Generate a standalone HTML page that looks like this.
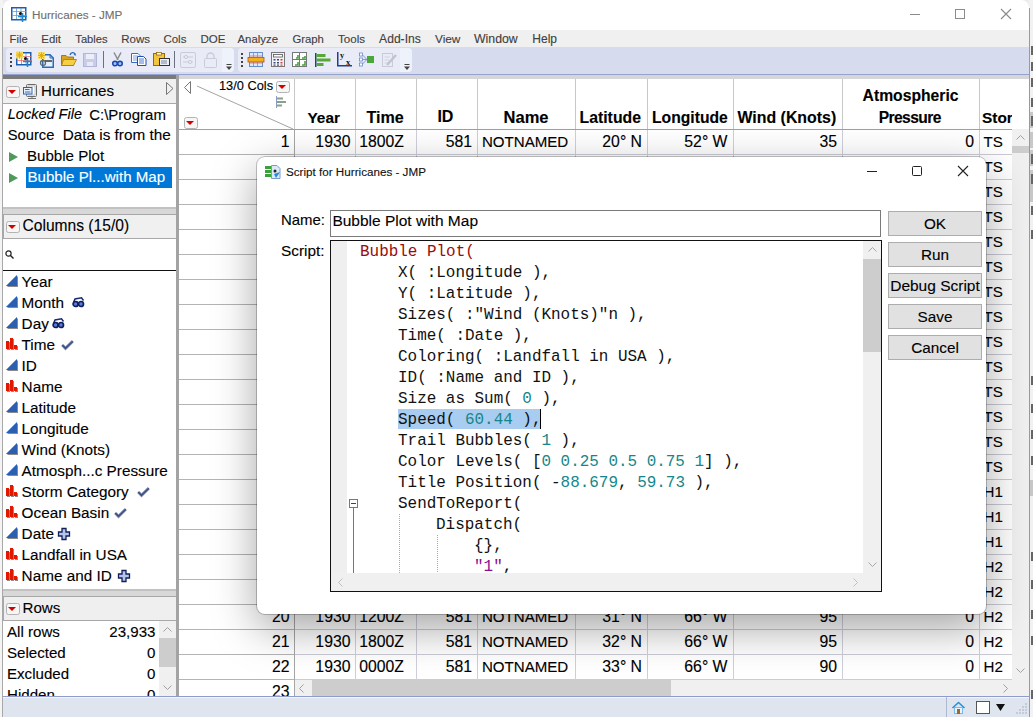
<!DOCTYPE html>
<html><head><meta charset="utf-8">
<style>
*{margin:0;padding:0;box-sizing:border-box}
html,body{width:1033px;height:717px;overflow:hidden;background:#ececec;font-family:"Liberation Sans",sans-serif;color:#000;position:relative}
.a{position:absolute}
.t{position:absolute;white-space:pre;line-height:1;-webkit-text-stroke:0.12px currentColor}
.dd{position:absolute;width:14px;height:12px;border:1px solid #b3b3b3;border-radius:2.5px;background:#f6f6f6}
.dd:after{content:"";position:absolute;left:1.2px;top:2.8px;border-left:4.2px solid transparent;border-right:4.2px solid transparent;border-top:4.5px solid #d40000}
svg{position:absolute;overflow:visible}
</style></head><body>

<div class="a" style="left:0px;top:0px;width:3px;height:717px;background:#f4f4f4"></div>
<div class="a" style="left:2px;top:8px;width:1px;height:709px;background:#a8a8a8"></div>
<div class="a" style="left:1029px;top:0px;width:4px;height:717px;background:#f2f2f2"></div>
<div class="a" style="left:1029px;top:8px;width:1px;height:709px;background:#9a9a9a"></div>
<div class="a" style="left:1030.5px;top:46px;width:2px;height:9px;background:#666"></div>
<div class="a" style="left:1030.5px;top:62px;width:2px;height:9px;background:#666"></div>
<div class="a" style="left:1030.5px;top:78px;width:2px;height:9px;background:#666"></div>
<div class="a" style="left:1030.5px;top:98px;width:2px;height:9px;background:#666"></div>
<div class="a" style="left:1030.5px;top:134px;width:2px;height:9px;background:#666"></div>
<div class="a" style="left:1030.5px;top:150px;width:2px;height:9px;background:#666"></div>
<div class="a" style="left:1030.5px;top:170px;width:2px;height:9px;background:#666"></div>
<div class="a" style="left:1030.5px;top:206px;width:2px;height:9px;background:#666"></div>
<div class="a" style="left:1030.5px;top:230px;width:2px;height:9px;background:#666"></div>
<div class="a" style="left:1030.5px;top:376px;width:2px;height:9px;background:#666"></div>
<div class="a" style="left:1030.5px;top:404px;width:2px;height:9px;background:#666"></div>
<div class="a" style="left:1030.5px;top:430px;width:2px;height:9px;background:#666"></div>
<div class="a" style="left:1030.5px;top:456px;width:2px;height:9px;background:#666"></div>
<div class="a" style="left:1030.5px;top:480px;width:2px;height:9px;background:#666"></div>
<div class="a" style="left:1030.5px;top:552px;width:2px;height:9px;background:#666"></div>
<div class="a" style="left:1030.5px;top:580px;width:2px;height:9px;background:#666"></div>
<div class="a" style="left:1030.5px;top:610px;width:2px;height:9px;background:#666"></div>
<div class="a" style="left:1030.5px;top:636px;width:2px;height:9px;background:#666"></div>
<div class="a" style="left:1030.5px;top:690px;width:2px;height:9px;background:#666"></div>
<div class="a" style="left:1030px;top:112px;width:3px;height:16px;background:#c8c8c8"></div>
<div class="a" style="left:1030px;top:132px;width:3px;height:16px;background:#c8c8c8"></div>
<div class="a" style="left:1030px;top:150px;width:3px;height:16px;background:#c8c8c8"></div>
<div class="a" style="left:1030px;top:170px;width:3px;height:16px;background:#c8c8c8"></div>
<div class="a" style="left:1030px;top:186px;width:3px;height:16px;background:#c8c8c8"></div>
<div class="a" style="left:1030px;top:480px;width:3px;height:16px;background:#c8c8c8"></div>
<div class="a" style="left:1030.5px;top:116px;width:2px;height:10px;background:#666"></div>
<div class="a" style="left:1030.5px;top:154px;width:2px;height:10px;background:#666"></div>
<div class="a" style="left:1030.5px;top:174px;width:2px;height:10px;background:#666"></div>
<div class="a" style="left:3px;top:0px;width:1026px;height:30px;background:#fff;border-top-left-radius:8px;border-top-right-radius:8px"></div>
<div class="t" style="left:32px;top:9.00px;font-size:11.7px;color:#707070">Hurricanes - JMP</div>
<svg style="left:11px;top:6px" width="16" height="16"><rect x="0.75" y="1.75" width="14" height="12" fill="#fff" stroke="#1b5fb0" stroke-width="1.5"/><path d="M1 5.5H15M1 9.5H15" stroke="#f07070" stroke-width="0.8"/><path d="M5.5 2V13M10 2V13" stroke="#5f8fd0" stroke-width="0.8"/><circle cx="9.5" cy="7.5" r="1.6" fill="#111"/><path d="M7 10.5H16M11.5 7V16" stroke="#1a88d0" stroke-width="1.6"/></svg>
<div class="a" style="left:910px;top:14px;width:10px;height:1px;background:#8a8a8a"></div>
<div class="a" style="left:955px;top:9px;width:10px;height:10px;border:1px solid #8a8a8a"></div>
<svg style="left:1001px;top:9px" width="10" height="10"><path d="M0 0L10 10M10 0L0 10" stroke="#8a8a8a" stroke-width="1.1"/></svg>
<div class="a" style="left:3px;top:30px;width:1026px;height:17px;background:#f0f0f0"></div>
<div class="t" style="left:9.6px;top:34.12px;font-size:11.2px;color:#404040">File</div>
<div class="t" style="left:41.3px;top:33.95px;font-size:11.4px;color:#404040">Edit</div>
<div class="t" style="left:75.3px;top:34.12px;font-size:11.2px;color:#404040">Tables</div>
<div class="t" style="left:121.3px;top:33.87px;font-size:11.5px;color:#404040">Rows</div>
<div class="t" style="left:163.4px;top:33.87px;font-size:11.5px;color:#404040">Cols</div>
<div class="t" style="left:200.4px;top:33.87px;font-size:11.5px;color:#404040">DOE</div>
<div class="t" style="left:237.5px;top:33.95px;font-size:11.4px;color:#404040">Analyze</div>
<div class="t" style="left:292.4px;top:34.01px;font-size:11.33px;color:#404040">Graph</div>
<div class="t" style="left:338.1px;top:33.81px;font-size:11.57px;color:#404040">Tools</div>
<div class="t" style="left:379.1px;top:33.36px;font-size:12.1px;color:#404040">Add-Ins</div>
<div class="t" style="left:435px;top:33.59px;font-size:11.82px;color:#404040">View</div>
<div class="t" style="left:474px;top:33.19px;font-size:12.3px;color:#404040">Window</div>
<div class="t" style="left:532.3px;top:33.44px;font-size:12px;color:#404040">Help</div>
<div class="a" style="left:3px;top:47px;width:1026px;height:28px;background:#d6dcee;border-bottom:1px solid #95a1cf"></div>
<div class="a" style="left:6px;top:48px;width:228px;height:24px;background:#e9ecf6;border-radius:4px"></div>
<div class="a" style="left:222px;top:48px;width:12px;height:24px;background:#eef2fb;border-radius:0 4px 4px 0"></div>
<div class="a" style="left:238px;top:48px;width:174px;height:24px;background:#e9ecf6;border-radius:4px"></div>
<div class="a" style="left:400px;top:48px;width:12px;height:24px;background:#eef2fb;border-radius:0 4px 4px 0"></div>
<div class="a" style="left:10px;top:52.5px;width:2px;height:2px;background:#444"></div>
<div class="a" style="left:10px;top:56.5px;width:2px;height:2px;background:#444"></div>
<div class="a" style="left:10px;top:60.5px;width:2px;height:2px;background:#444"></div>
<div class="a" style="left:10px;top:64.5px;width:2px;height:2px;background:#444"></div>
<div class="a" style="left:241px;top:52.5px;width:2px;height:2px;background:#444"></div>
<div class="a" style="left:241px;top:56.5px;width:2px;height:2px;background:#444"></div>
<div class="a" style="left:241px;top:60.5px;width:2px;height:2px;background:#444"></div>
<div class="a" style="left:241px;top:64.5px;width:2px;height:2px;background:#444"></div>
<svg style="left:16px;top:51px" width="16" height="16"><rect x="0.75" y="1.75" width="14" height="12" fill="#fff" stroke="#1b5fb0" stroke-width="1.5"/><path d="M1 5.5H15M1 9.5H15" stroke="#f07070" stroke-width="0.8"/><path d="M5.5 2V13M10 2V13" stroke="#5f8fd0" stroke-width="0.8"/><circle cx="9.5" cy="7.5" r="1.6" fill="#111"/><path d="M7 10.5H16M11.5 7V16" stroke="#1a88d0" stroke-width="1.6"/><g transform="translate(0,0.5)"><g fill="#f2c200"><rect x="0" y="0" width="7" height="7" fill="#f7de6a"/><path d="M3.5 0V7M0 3.5H7M1 1L6 6M6 1L1 6" stroke="#e0a800" stroke-width="0.9"/></g></g></svg>
<svg style="left:38px;top:52px" width="17" height="16"><path d="M4.75 2.75H12L15.25 6V15.25H4.75Z" fill="#e6f0fa" stroke="#2a6ab8" stroke-width="1.5"/><path d="M12 2.75V6H15.25" fill="none" stroke="#2a6ab8" stroke-width="1"/><circle cx="5" cy="11" r="2.5" fill="none" stroke="#666" stroke-width="1.3"/><path d="M7 9H14" stroke="#555" stroke-width="1.8"/><g fill="#f2c200"><rect x="0" y="0" width="7" height="7" fill="#f7de6a"/><path d="M3.5 0V7M0 3.5H7M1 1L6 6M6 1L1 6" stroke="#e0a800" stroke-width="0.9"/></g></svg>
<svg style="left:61px;top:51px" width="16" height="16"><path d="M0.5 4.5H5L6.5 6H12.5V14.5H0.5Z" fill="#d9a520" stroke="#8a6410" stroke-width="0.8"/><path d="M2.5 8.5H15.5L12.5 14.5H0.5Z" fill="#f7cf45" stroke="#a87a10" stroke-width="0.8"/><path d="M9 4C10 1 13 1 14 3" fill="none" stroke="#2a6ab8" stroke-width="1.4"/><path d="M12.5 3.5L15 2.5L14.5 5Z" fill="#2a6ab8"/></svg>
<svg style="left:83px;top:53px" width="15" height="15"><rect x="0.5" y="0.5" width="13" height="13" fill="#c9cde8" stroke="#b0b6da"/><rect x="3" y="1" width="8" height="5" fill="#eceef8"/><rect x="4" y="9" width="6" height="4" fill="#e8eaf6"/></svg>
<div class="a" style="left:103px;top:51px;width:1px;height:17px;background:#6a7080"></div>
<svg style="left:112px;top:52px" width="11" height="15"><path d="M2 0.5L6 8M9 0.5L5 8" stroke="#8a8a8a" stroke-width="1.5"/><circle cx="3" cy="11.5" r="2.3" fill="#9fbff0" stroke="#1848b0" stroke-width="1.5"/><circle cx="8" cy="11.5" r="2.3" fill="#9fbff0" stroke="#1848b0" stroke-width="1.5"/></svg>
<svg style="left:131px;top:53px" width="16" height="13"><path d="M0.5 0.5H7L9 2.5V9.5H0.5Z" fill="#fff" stroke="#3a6ac8"/><path d="M2 3H7M2 5H7M2 7H7" stroke="#5a8ad8" stroke-width="0.8"/><path d="M6.5 3.5H12.5L15 6V12.5H6.5Z" fill="#fff" stroke="#1f4fb0"/><path d="M8 6H13M8 8H13M8 10H13" stroke="#3a6ac8" stroke-width="0.9"/></svg>
<svg style="left:153px;top:52px" width="17" height="14"><rect x="0.5" y="1.5" width="11" height="12" fill="#f3c53a" stroke="#9a6a00"/><rect x="3.5" y="0.5" width="5" height="2.5" fill="#fff" stroke="#9a6a00" stroke-width="0.8"/><rect x="6.5" y="6.5" width="10" height="7" fill="#eceff6" stroke="#333"/><path d="M8 9H14M8 11H14" stroke="#6a7a9a" stroke-width="0.9"/></svg>
<div class="a" style="left:174px;top:51px;width:1px;height:17px;background:#6a7080"></div>
<svg style="left:180px;top:52px" width="17" height="16"><rect x="0.5" y="0.5" width="15" height="15" rx="1.5" fill="none" stroke="#c8ccd8"/><path d="M3 5H13M3 10H13" stroke="#c8ccd8"/><circle cx="6" cy="5" r="1.6" fill="#e9ecf6" stroke="#c8ccd8"/><circle cx="10" cy="10" r="1.6" fill="#e9ecf6" stroke="#c8ccd8"/></svg>
<svg style="left:204px;top:52px" width="13" height="16"><path d="M3 7V4.5A3.5 3.5 0 0 1 10 4.5V7" fill="none" stroke="#c8ccd8" stroke-width="1.3"/><rect x="0.5" y="6.5" width="12" height="9" rx="1" fill="none" stroke="#c8ccd8"/></svg>
<svg style="left:225.5px;top:63.5px" width="6" height="7"><path d="M0.5 0.5H5.5" stroke="#444"/><path d="M0 2.5H6L3 6Z" fill="#444"/></svg>
<svg style="left:248px;top:52px" width="17" height="15"><rect x="1.5" y="0.5" width="13" height="14" fill="#dfe8f7" stroke="#6a8cc8"/><path d="M2 4H14M2 11H14M5.5 1V14M9.5 1V14" stroke="#e07060" stroke-width="0.8"/><rect x="0" y="5.5" width="16" height="4.5" fill="#f0b020" stroke="#c05010" stroke-width="0.8"/></svg>
<svg style="left:271px;top:52px" width="15" height="15"><rect x="0.5" y="0.5" width="13" height="14" fill="#f4f4f6" stroke="#777"/><rect x="2.5" y="2.5" width="9" height="2.5" fill="#fff" stroke="#555" stroke-width="0.8"/><g fill="#3a4a7a"><rect x="2.5" y="7" width="2" height="1.5"/><rect x="6" y="7" width="2" height="1.5"/><rect x="2.5" y="10" width="2" height="1.5"/><rect x="6" y="10" width="2" height="1.5"/><rect x="2.5" y="12.5" width="2" height="1.2"/><rect x="6" y="12.5" width="2" height="1.2"/></g><g fill="#d04040"><rect x="9.5" y="7" width="2" height="1.5"/><rect x="9.5" y="10" width="2" height="1.5"/><rect x="9.5" y="12.5" width="2" height="1.2"/></g></svg>
<svg style="left:292px;top:52px" width="16" height="15"><rect x="0.5" y="0.5" width="14" height="14" fill="#fff" stroke="#777"/><path d="M7.5 1V14M1 7.5H14" stroke="#777"/><path d="M4 6H6V3M10 6H13V4M3 13H6V10M10 13H13V9" stroke="#4aa040" stroke-width="1.6" fill="none"/></svg>
<svg style="left:315px;top:53px" width="16" height="14"><path d="M0.75 0V14" stroke="#1f3f8f" stroke-width="1.5"/><rect x="1.5" y="1" width="9" height="3" fill="#58a838"/><rect x="1.5" y="5.5" width="14" height="3" fill="#58a838"/><rect x="1.5" y="10" width="7" height="3" fill="#58a838"/></svg>
<svg style="left:337px;top:51px" width="15" height="16"><path d="M0.75 1V14.75H15" fill="none" stroke="#1f3f8f" stroke-width="1.5"/><text x="3" y="7" font-family="Liberation Serif" font-weight="bold" font-size="8.5" fill="#111">y</text><text x="9" y="13.5" font-family="Liberation Serif" font-weight="bold" font-size="8.5" fill="#111">x</text></svg>
<svg style="left:359px;top:52px" width="15" height="15"><path d="M3 2.5L8 7.5M3 7.5H8M3 12.5L8 7.5" stroke="#7a9ad8" stroke-width="1"/><rect x="0.5" y="1" width="3" height="3" fill="#fff" stroke="#6a8ac8" stroke-width="0.8"/><rect x="0.5" y="6" width="3" height="3" fill="#fff" stroke="#6a8ac8" stroke-width="0.8"/><rect x="0.5" y="11" width="3" height="3" fill="#fff" stroke="#6a8ac8" stroke-width="0.8"/><rect x="8" y="4" width="7" height="7" fill="#4aa838"/></svg>
<svg style="left:382px;top:52px" width="15" height="16"><rect x="0.5" y="1.5" width="10" height="13" fill="none" stroke="#c8ccd8"/><path d="M2.5 5H8M2.5 8H7M2.5 11H6" stroke="#d0d4e0"/><path d="M5 13L14 3" stroke="#c0c4d2" stroke-width="2.5"/></svg>
<svg style="left:403.5px;top:63.5px" width="6" height="7"><path d="M0.5 0.5H5.5" stroke="#444"/><path d="M0 2.5H6L3 6Z" fill="#444"/></svg>
<div class="a" style="left:3px;top:75px;width:173px;height:4px;background:#7a7a7a"></div>
<div class="a" style="left:179px;top:75px;width:850px;height:4px;background:#d6d6d6"></div>
<div class="a" style="left:176px;top:75px;width:3px;height:621px;background:#a3a3a3"></div>
<div class="a" style="left:3px;top:79px;width:173px;height:617px;background:#fff"></div>
<div class="a" style="left:3px;top:79px;width:173px;height:25px;background:#f0f0f0;border-bottom:1px solid #a8a8a8"></div>
<div class="dd" style="left:6px;top:86px"></div>
<svg style="left:23px;top:84px" width="15" height="16"><rect x="3.5" y="0.5" width="10" height="12" rx="1" fill="#f4f4f4" stroke="#6a6a6a"/><rect x="5" y="2" width="7" height="9" fill="#fff" stroke="#999" stroke-width="0.6"/><path d="M5 14.5H13M9 12.5V14.5" stroke="#707070"/><rect x="0.5" y="3.5" width="8.5" height="6.5" fill="#e8f0fa" stroke="#2a62b8"/><path d="M2 5.5H6.5M2 8H7.5" stroke="#3a6ac0" stroke-width="1.1"/></svg>
<div class="t" style="left:41px;top:83.22px;font-size:15.1px;">Hurricanes</div>
<svg style="left:166px;top:82px" width="8" height="13"><path d="M0.5 0.5L7 6.5L0.5 12.5Z" fill="none" stroke="#777"/></svg>
<div class="t" style="left:7.8px;top:107.03px;font-size:14.5px;font-style:italic">Locked File</div>
<div class="t" style="left:89.2px;top:106.60px;font-size:15px;">C:\Program</div>
<div class="t" style="left:7.8px;top:127.76px;font-size:14.7px;">Source</div>
<div class="t" style="left:62.7px;top:127.25px;font-size:15.3px;">Data is from the</div>
<svg style="left:9px;top:152px" width="9" height="10"><path d="M0 0L9 5L0 10Z" fill="#4f9a5a"/></svg>
<svg style="left:9px;top:173px" width="9" height="10"><path d="M0 0L9 5L0 10Z" fill="#4f9a5a"/></svg>
<div class="t" style="left:27px;top:148.42px;font-size:15.1px;">Bubble Plot</div>
<div class="a" style="left:26px;top:167px;width:146px;height:21px;background:#0078d7"></div>
<div class="t" style="left:27.5px;top:169.42px;font-size:15.1px;color:#fff">Bubble Pl...with Map</div>
<div class="a" style="left:3px;top:207px;width:173px;height:7px;background:#d8d8d8;border-top:2px solid #c2c2c2"></div>
<div class="a" style="left:3px;top:214px;width:173px;height:25px;background:#f0f0f0;border:1px solid #a8a8a8;border-right:none"></div>
<div class="dd" style="left:6px;top:221px"></div>
<div class="t" style="left:22.5px;top:218.29px;font-size:15.6px;">Columns (15/0)</div>
<svg style="left:5px;top:250px" width="9" height="9"><circle cx="3.5" cy="3.5" r="2.6" fill="none" stroke="#222" stroke-width="1.2"/><line x1="5.5" y1="5.5" x2="8.5" y2="8.5" stroke="#222" stroke-width="1.4"/></svg>
<div class="a" style="left:3px;top:270px;width:173px;height:1px;background:#111"></div>
<svg style="left:6px;top:275.0px" width="13" height="13"><path d="M1 12L12 1L12 12Z" fill="#8a8a8a"/><path d="M0 11L11 0L11 11Z" fill="#2d5fb0"/><path d="M0.5 10.5L10.5 0.5" stroke="#5a9af0" stroke-width="1" stroke-dasharray="1,0.5"/></svg>
<div class="t" style="left:21.6px;top:273.65px;font-size:15.3px;">Year</div>
<svg style="left:6px;top:296.0px" width="13" height="13"><path d="M1 12L12 1L12 12Z" fill="#8a8a8a"/><path d="M0 11L11 0L11 11Z" fill="#2d5fb0"/><path d="M0.5 10.5L10.5 0.5" stroke="#5a9af0" stroke-width="1" stroke-dasharray="1,0.5"/></svg>
<div class="t" style="left:21.6px;top:294.65px;font-size:15.3px;">Month</div>
<svg style="left:72.0px;top:297.1px" width="13" height="11"><path d="M1.5 5.5L3 2L9.5 0.8L11.5 3.5" fill="none" stroke="#1a2c78" stroke-width="1.5"/><circle cx="3.6" cy="7" r="2.5" fill="#5a7ad8" stroke="#101f5c" stroke-width="1.7"/><circle cx="9" cy="7" r="2.5" fill="#5a7ad8" stroke="#101f5c" stroke-width="1.7"/></svg>
<svg style="left:6px;top:317.0px" width="13" height="13"><path d="M1 12L12 1L12 12Z" fill="#8a8a8a"/><path d="M0 11L11 0L11 11Z" fill="#2d5fb0"/><path d="M0.5 10.5L10.5 0.5" stroke="#5a9af0" stroke-width="1" stroke-dasharray="1,0.5"/></svg>
<div class="t" style="left:21.6px;top:315.65px;font-size:15.3px;">Day</div>
<svg style="left:52.2px;top:318.1px" width="13" height="11"><path d="M1.5 5.5L3 2L9.5 0.8L11.5 3.5" fill="none" stroke="#1a2c78" stroke-width="1.5"/><circle cx="3.6" cy="7" r="2.5" fill="#5a7ad8" stroke="#101f5c" stroke-width="1.7"/><circle cx="9" cy="7" r="2.5" fill="#5a7ad8" stroke="#101f5c" stroke-width="1.7"/></svg>
<svg style="left:6px;top:338.3px" width="13" height="13"><g fill="#8a8a8a"><rect x="1" y="4" width="3" height="8"/><rect x="5" y="1" width="3" height="11"/><rect x="9" y="8" width="3" height="4"/></g><g fill="#e01800"><rect x="0" y="3" width="3" height="8"/><rect x="4" y="0" width="3" height="11"/><rect x="8" y="7" width="3" height="4"/></g></svg>
<div class="t" style="left:21.6px;top:336.65px;font-size:15.3px;">Time</div>
<svg style="left:61.0px;top:339.6px" width="13" height="10"><path d="M1.2 5L4.5 8.3L11.8 1.2" fill="none" stroke="#8a96b8" stroke-width="3"/><path d="M1.2 5L4.5 8.3L11.8 1.2" fill="none" stroke="#3f4f80" stroke-width="1.6"/></svg>
<svg style="left:6px;top:359.0px" width="13" height="13"><path d="M1 12L12 1L12 12Z" fill="#8a8a8a"/><path d="M0 11L11 0L11 11Z" fill="#2d5fb0"/><path d="M0.5 10.5L10.5 0.5" stroke="#5a9af0" stroke-width="1" stroke-dasharray="1,0.5"/></svg>
<div class="t" style="left:21.6px;top:357.65px;font-size:15.3px;">ID</div>
<svg style="left:6px;top:380.3px" width="13" height="13"><g fill="#8a8a8a"><rect x="1" y="4" width="3" height="8"/><rect x="5" y="1" width="3" height="11"/><rect x="9" y="8" width="3" height="4"/></g><g fill="#e01800"><rect x="0" y="3" width="3" height="8"/><rect x="4" y="0" width="3" height="11"/><rect x="8" y="7" width="3" height="4"/></g></svg>
<div class="t" style="left:21.6px;top:378.65px;font-size:15.3px;">Name</div>
<svg style="left:6px;top:401.0px" width="13" height="13"><path d="M1 12L12 1L12 12Z" fill="#8a8a8a"/><path d="M0 11L11 0L11 11Z" fill="#2d5fb0"/><path d="M0.5 10.5L10.5 0.5" stroke="#5a9af0" stroke-width="1" stroke-dasharray="1,0.5"/></svg>
<div class="t" style="left:21.6px;top:399.65px;font-size:15.3px;">Latitude</div>
<svg style="left:6px;top:422.0px" width="13" height="13"><path d="M1 12L12 1L12 12Z" fill="#8a8a8a"/><path d="M0 11L11 0L11 11Z" fill="#2d5fb0"/><path d="M0.5 10.5L10.5 0.5" stroke="#5a9af0" stroke-width="1" stroke-dasharray="1,0.5"/></svg>
<div class="t" style="left:21.6px;top:420.65px;font-size:15.3px;">Longitude</div>
<svg style="left:6px;top:443.0px" width="13" height="13"><path d="M1 12L12 1L12 12Z" fill="#8a8a8a"/><path d="M0 11L11 0L11 11Z" fill="#2d5fb0"/><path d="M0.5 10.5L10.5 0.5" stroke="#5a9af0" stroke-width="1" stroke-dasharray="1,0.5"/></svg>
<div class="t" style="left:21.6px;top:441.65px;font-size:15.3px;">Wind (Knots)</div>
<svg style="left:6px;top:464.0px" width="13" height="13"><path d="M1 12L12 1L12 12Z" fill="#8a8a8a"/><path d="M0 11L11 0L11 11Z" fill="#2d5fb0"/><path d="M0.5 10.5L10.5 0.5" stroke="#5a9af0" stroke-width="1" stroke-dasharray="1,0.5"/></svg>
<div class="t" style="left:21.6px;top:462.65px;font-size:15.3px;">Atmosph...c Pressure</div>
<svg style="left:6px;top:485.3px" width="13" height="13"><g fill="#8a8a8a"><rect x="1" y="4" width="3" height="8"/><rect x="5" y="1" width="3" height="11"/><rect x="9" y="8" width="3" height="4"/></g><g fill="#e01800"><rect x="0" y="3" width="3" height="8"/><rect x="4" y="0" width="3" height="11"/><rect x="8" y="7" width="3" height="4"/></g></svg>
<div class="t" style="left:21.6px;top:483.65px;font-size:15.3px;">Storm Category</div>
<svg style="left:137.0px;top:486.6px" width="13" height="10"><path d="M1.2 5L4.5 8.3L11.8 1.2" fill="none" stroke="#8a96b8" stroke-width="3"/><path d="M1.2 5L4.5 8.3L11.8 1.2" fill="none" stroke="#3f4f80" stroke-width="1.6"/></svg>
<svg style="left:6px;top:506.3px" width="13" height="13"><g fill="#8a8a8a"><rect x="1" y="4" width="3" height="8"/><rect x="5" y="1" width="3" height="11"/><rect x="9" y="8" width="3" height="4"/></g><g fill="#e01800"><rect x="0" y="3" width="3" height="8"/><rect x="4" y="0" width="3" height="11"/><rect x="8" y="7" width="3" height="4"/></g></svg>
<div class="t" style="left:21.6px;top:504.65px;font-size:15.3px;">Ocean Basin</div>
<svg style="left:113.5px;top:507.6px" width="13" height="10"><path d="M1.2 5L4.5 8.3L11.8 1.2" fill="none" stroke="#8a96b8" stroke-width="3"/><path d="M1.2 5L4.5 8.3L11.8 1.2" fill="none" stroke="#3f4f80" stroke-width="1.6"/></svg>
<svg style="left:6px;top:527.0px" width="13" height="13"><path d="M1 12L12 1L12 12Z" fill="#8a8a8a"/><path d="M0 11L11 0L11 11Z" fill="#2d5fb0"/><path d="M0.5 10.5L10.5 0.5" stroke="#5a9af0" stroke-width="1" stroke-dasharray="1,0.5"/></svg>
<div class="t" style="left:21.6px;top:525.65px;font-size:15.3px;">Date</div>
<svg style="left:58.0px;top:527.6px" width="12" height="12"><path d="M4 0.5H8V4H11.5V8H8V11.5H4V8H0.5V4H4Z" fill="#b4c4ea" stroke="#101f5a" stroke-width="1.3"/></svg>
<svg style="left:6px;top:548.3px" width="13" height="13"><g fill="#8a8a8a"><rect x="1" y="4" width="3" height="8"/><rect x="5" y="1" width="3" height="11"/><rect x="9" y="8" width="3" height="4"/></g><g fill="#e01800"><rect x="0" y="3" width="3" height="8"/><rect x="4" y="0" width="3" height="11"/><rect x="8" y="7" width="3" height="4"/></g></svg>
<div class="t" style="left:21.6px;top:546.65px;font-size:15.3px;">Landfall in USA</div>
<svg style="left:6px;top:569.3px" width="13" height="13"><g fill="#8a8a8a"><rect x="1" y="4" width="3" height="8"/><rect x="5" y="1" width="3" height="11"/><rect x="9" y="8" width="3" height="4"/></g><g fill="#e01800"><rect x="0" y="3" width="3" height="8"/><rect x="4" y="0" width="3" height="11"/><rect x="8" y="7" width="3" height="4"/></g></svg>
<div class="t" style="left:21.6px;top:567.65px;font-size:15.3px;">Name and ID</div>
<svg style="left:118.0px;top:569.6px" width="12" height="12"><path d="M4 0.5H8V4H11.5V8H8V11.5H4V8H0.5V4H4Z" fill="#b4c4ea" stroke="#101f5a" stroke-width="1.3"/></svg>
<div class="a" style="left:3px;top:589px;width:173px;height:8px;background:#d8d8d8;border-top:2px solid #c2c2c2"></div>
<div class="a" style="left:3px;top:596px;width:173px;height:25px;background:#efefef;border:1px solid #a8a8a8;border-right:none"></div>
<div class="dd" style="left:6px;top:603px"></div>
<div class="t" style="left:22.5px;top:599.92px;font-size:15.1px;">Rows</div>
<div class="t" style="left:7px;top:624.22px;font-size:15.1px;">All rows</div>
<div class="t" style="right:877.5px;top:624.22px;font-size:15.1px;">23,933</div>
<div class="t" style="left:7px;top:645.12px;font-size:15.1px;">Selected</div>
<div class="t" style="right:877.5px;top:645.12px;font-size:15.1px;">0</div>
<div class="t" style="left:7px;top:666.02px;font-size:15.1px;">Excluded</div>
<div class="t" style="right:877.5px;top:666.02px;font-size:15.1px;">0</div>
<div class="t" style="left:7px;top:686.92px;font-size:15.1px;">Hidden</div>
<div class="t" style="right:877.5px;top:686.92px;font-size:15.1px;">0</div>
<div class="a" style="left:159px;top:621px;width:17px;height:75px;background:#f0f0f0"></div>
<div class="a" style="left:159px;top:638px;width:17px;height:29px;background:#cdcdcd"></div>
<svg style="left:163px;top:627px" width="9" height="5"><path d="M0.5 4.5L4.5 0.5L8.5 4.5" fill="none" stroke="#a0a0a0"/></svg>
<svg style="left:163px;top:685px" width="9" height="5"><path d="M0.5 0.5L4.5 4.5L8.5 0.5" fill="none" stroke="#a0a0a0"/></svg>
<div class="a" style="left:179px;top:79px;width:850px;height:617px;background:#fff"></div>
<div class="a" style="left:179px;top:129px;width:833px;height:1px;background:#a0a0a0"></div>
<div class="a" style="left:294px;top:79px;width:1px;height:50px;background:#c8c8c8"></div>
<div class="a" style="left:355px;top:79px;width:1px;height:50px;background:#c8c8c8"></div>
<div class="a" style="left:416px;top:79px;width:1px;height:50px;background:#c8c8c8"></div>
<div class="a" style="left:477px;top:79px;width:1px;height:50px;background:#c8c8c8"></div>
<div class="a" style="left:575px;top:79px;width:1px;height:50px;background:#c8c8c8"></div>
<div class="a" style="left:647px;top:79px;width:1px;height:50px;background:#c8c8c8"></div>
<div class="a" style="left:733px;top:79px;width:1px;height:50px;background:#c8c8c8"></div>
<div class="a" style="left:842px;top:79px;width:1px;height:50px;background:#c8c8c8"></div>
<div class="a" style="left:979px;top:79px;width:1px;height:50px;background:#c8c8c8"></div>
<svg style="left:179px;top:79px" width="115" height="50"><line x1="18" y1="7" x2="114" y2="50" stroke="#999" stroke-width="0.9"/><path d="M11.5 2.5L5.5 8.5L11.5 14.5Z" fill="none" stroke="#777"/><path d="M97.5 17V29" stroke="#8a9cc8" stroke-width="1"/><path d="M98 19.5H104M98 23H107M98 26.5H103" stroke="#8aa08a" stroke-width="2" fill="none"/></svg>
<div class="t" style="left:219px;top:79.66px;font-size:12.8px;">13/0 Cols</div>
<div class="dd" style="left:276px;top:81px"></div>
<div class="dd" style="left:184px;top:117px"></div>
<div class="t" style="left:173.7px;width:300px;text-align:center;top:109.96px;font-size:15.4px;font-weight:bold">Year</div>
<div class="t" style="left:235.04999999999995px;width:300px;text-align:center;top:109.37px;font-size:16.1px;font-weight:bold">Time</div>
<div class="t" style="left:295.4px;width:300px;text-align:center;top:109.46px;font-size:16px;font-weight:bold">ID</div>
<div class="t" style="left:376.1px;width:300px;text-align:center;top:109.03px;font-size:16.5px;font-weight:bold">Name</div>
<div class="t" style="left:460.25px;width:300px;text-align:center;top:109.63px;font-size:15.8px;font-weight:bold">Latitude</div>
<div class="t" style="left:539.9px;width:300px;text-align:center;top:109.71px;font-size:15.7px;font-weight:bold">Longitude</div>
<div class="t" style="left:636.85px;width:300px;text-align:center;top:109.54px;font-size:15.9px;font-weight:bold">Wind (Knots)</div>
<div class="t" style="left:760.55px;width:300px;text-align:center;top:87.61px;font-size:15.7px;font-weight:bold">Atmospheric</div>
<div class="t" style="left:759.75px;width:300px;text-align:center;top:109.79px;font-size:15.6px;font-weight:bold;letter-spacing:-0.6px">Pressure</div>
<div class="a" style="left:979px;top:79px;width:33px;height:50px;overflow:hidden">
<div class="t" style="left:3px;top:30.56px;font-size:15.4px;font-weight:bold">Storm</div>
</div>
<div class="a" style="left:179px;top:154px;width:115px;height:1px;background:#b4b4b4"></div>
<div class="a" style="left:295px;top:154px;width:717px;height:1px;background:#cbcbd6"></div>
<div class="a" style="left:179px;top:179px;width:115px;height:1px;background:#b4b4b4"></div>
<div class="a" style="left:295px;top:179px;width:717px;height:1px;background:#cbcbd6"></div>
<div class="a" style="left:179px;top:204px;width:115px;height:1px;background:#b4b4b4"></div>
<div class="a" style="left:295px;top:204px;width:717px;height:1px;background:#cbcbd6"></div>
<div class="a" style="left:179px;top:229px;width:115px;height:1px;background:#b4b4b4"></div>
<div class="a" style="left:295px;top:229px;width:717px;height:1px;background:#cbcbd6"></div>
<div class="a" style="left:179px;top:254px;width:115px;height:1px;background:#b4b4b4"></div>
<div class="a" style="left:295px;top:254px;width:717px;height:1px;background:#cbcbd6"></div>
<div class="a" style="left:179px;top:279px;width:115px;height:1px;background:#b4b4b4"></div>
<div class="a" style="left:295px;top:279px;width:717px;height:1px;background:#cbcbd6"></div>
<div class="a" style="left:179px;top:304px;width:115px;height:1px;background:#b4b4b4"></div>
<div class="a" style="left:295px;top:304px;width:717px;height:1px;background:#cbcbd6"></div>
<div class="a" style="left:179px;top:329px;width:115px;height:1px;background:#b4b4b4"></div>
<div class="a" style="left:295px;top:329px;width:717px;height:1px;background:#cbcbd6"></div>
<div class="a" style="left:179px;top:354px;width:115px;height:1px;background:#b4b4b4"></div>
<div class="a" style="left:295px;top:354px;width:717px;height:1px;background:#cbcbd6"></div>
<div class="a" style="left:179px;top:379px;width:115px;height:1px;background:#b4b4b4"></div>
<div class="a" style="left:295px;top:379px;width:717px;height:1px;background:#cbcbd6"></div>
<div class="a" style="left:179px;top:404px;width:115px;height:1px;background:#b4b4b4"></div>
<div class="a" style="left:295px;top:404px;width:717px;height:1px;background:#cbcbd6"></div>
<div class="a" style="left:179px;top:429px;width:115px;height:1px;background:#b4b4b4"></div>
<div class="a" style="left:295px;top:429px;width:717px;height:1px;background:#cbcbd6"></div>
<div class="a" style="left:179px;top:454px;width:115px;height:1px;background:#b4b4b4"></div>
<div class="a" style="left:295px;top:454px;width:717px;height:1px;background:#cbcbd6"></div>
<div class="a" style="left:179px;top:479px;width:115px;height:1px;background:#b4b4b4"></div>
<div class="a" style="left:295px;top:479px;width:717px;height:1px;background:#cbcbd6"></div>
<div class="a" style="left:179px;top:504px;width:115px;height:1px;background:#b4b4b4"></div>
<div class="a" style="left:295px;top:504px;width:717px;height:1px;background:#cbcbd6"></div>
<div class="a" style="left:179px;top:529px;width:115px;height:1px;background:#b4b4b4"></div>
<div class="a" style="left:295px;top:529px;width:717px;height:1px;background:#cbcbd6"></div>
<div class="a" style="left:179px;top:554px;width:115px;height:1px;background:#b4b4b4"></div>
<div class="a" style="left:295px;top:554px;width:717px;height:1px;background:#cbcbd6"></div>
<div class="a" style="left:179px;top:579px;width:115px;height:1px;background:#b4b4b4"></div>
<div class="a" style="left:295px;top:579px;width:717px;height:1px;background:#cbcbd6"></div>
<div class="a" style="left:179px;top:604px;width:115px;height:1px;background:#b4b4b4"></div>
<div class="a" style="left:295px;top:604px;width:717px;height:1px;background:#cbcbd6"></div>
<div class="a" style="left:179px;top:629px;width:115px;height:1px;background:#b4b4b4"></div>
<div class="a" style="left:295px;top:629px;width:717px;height:1px;background:#cbcbd6"></div>
<div class="a" style="left:179px;top:654px;width:115px;height:1px;background:#b4b4b4"></div>
<div class="a" style="left:295px;top:654px;width:717px;height:1px;background:#cbcbd6"></div>
<div class="a" style="left:179px;top:679px;width:115px;height:1px;background:#b4b4b4"></div>
<div class="a" style="left:295px;top:679px;width:717px;height:1px;background:#cbcbd6"></div>
<div class="t" style="right:743.5px;top:134.13px;font-size:15.8px;">1</div>
<div class="t" style="right:682.5px;top:134.13px;font-size:15.8px;">1930</div>
<div class="t" style="left:359.2px;top:134.17px;font-size:15.75px;">1800Z</div>
<div class="t" style="right:561px;top:134.13px;font-size:15.8px;">581</div>
<div class="t" style="left:481.9px;top:133.92px;font-size:15.1px;">NOTNAMED</div>
<div class="t" style="right:391px;top:134.13px;font-size:15.8px;">20° N</div>
<div class="t" style="right:305.5px;top:134.13px;font-size:15.8px;">52° W</div>
<div class="t" style="right:196px;top:134.13px;font-size:15.8px;">35</div>
<div class="t" style="right:59px;top:134.13px;font-size:15.8px;">0</div>
<div class="t" style="left:983.5px;top:133.92px;font-size:15.1px;">TS</div>
<div class="t" style="right:743.5px;top:159.13px;font-size:15.8px;">2</div>
<div class="t" style="right:682.5px;top:159.13px;font-size:15.8px;">1930</div>
<div class="t" style="left:359.2px;top:159.17px;font-size:15.75px;">1800Z</div>
<div class="t" style="right:561px;top:159.13px;font-size:15.8px;">581</div>
<div class="t" style="left:481.9px;top:158.92px;font-size:15.1px;">NOTNAMED</div>
<div class="t" style="right:391px;top:159.13px;font-size:15.8px;">20° N</div>
<div class="t" style="right:305.5px;top:159.13px;font-size:15.8px;">52° W</div>
<div class="t" style="right:196px;top:159.13px;font-size:15.8px;">35</div>
<div class="t" style="right:59px;top:159.13px;font-size:15.8px;">0</div>
<div class="t" style="left:983.5px;top:158.92px;font-size:15.1px;">TS</div>
<div class="t" style="right:743.5px;top:184.13px;font-size:15.8px;">3</div>
<div class="t" style="right:682.5px;top:184.13px;font-size:15.8px;">1930</div>
<div class="t" style="left:359.2px;top:184.17px;font-size:15.75px;">1800Z</div>
<div class="t" style="right:561px;top:184.13px;font-size:15.8px;">581</div>
<div class="t" style="left:481.9px;top:183.92px;font-size:15.1px;">NOTNAMED</div>
<div class="t" style="right:391px;top:184.13px;font-size:15.8px;">20° N</div>
<div class="t" style="right:305.5px;top:184.13px;font-size:15.8px;">52° W</div>
<div class="t" style="right:196px;top:184.13px;font-size:15.8px;">35</div>
<div class="t" style="right:59px;top:184.13px;font-size:15.8px;">0</div>
<div class="t" style="left:983.5px;top:183.92px;font-size:15.1px;">TS</div>
<div class="t" style="right:743.5px;top:209.13px;font-size:15.8px;">4</div>
<div class="t" style="right:682.5px;top:209.13px;font-size:15.8px;">1930</div>
<div class="t" style="left:359.2px;top:209.17px;font-size:15.75px;">1800Z</div>
<div class="t" style="right:561px;top:209.13px;font-size:15.8px;">581</div>
<div class="t" style="left:481.9px;top:208.92px;font-size:15.1px;">NOTNAMED</div>
<div class="t" style="right:391px;top:209.13px;font-size:15.8px;">20° N</div>
<div class="t" style="right:305.5px;top:209.13px;font-size:15.8px;">52° W</div>
<div class="t" style="right:196px;top:209.13px;font-size:15.8px;">35</div>
<div class="t" style="right:59px;top:209.13px;font-size:15.8px;">0</div>
<div class="t" style="left:983.5px;top:208.92px;font-size:15.1px;">TS</div>
<div class="t" style="right:743.5px;top:234.13px;font-size:15.8px;">5</div>
<div class="t" style="right:682.5px;top:234.13px;font-size:15.8px;">1930</div>
<div class="t" style="left:359.2px;top:234.17px;font-size:15.75px;">1800Z</div>
<div class="t" style="right:561px;top:234.13px;font-size:15.8px;">581</div>
<div class="t" style="left:481.9px;top:233.92px;font-size:15.1px;">NOTNAMED</div>
<div class="t" style="right:391px;top:234.13px;font-size:15.8px;">20° N</div>
<div class="t" style="right:305.5px;top:234.13px;font-size:15.8px;">52° W</div>
<div class="t" style="right:196px;top:234.13px;font-size:15.8px;">35</div>
<div class="t" style="right:59px;top:234.13px;font-size:15.8px;">0</div>
<div class="t" style="left:983.5px;top:233.92px;font-size:15.1px;">TS</div>
<div class="t" style="right:743.5px;top:259.13px;font-size:15.8px;">6</div>
<div class="t" style="right:682.5px;top:259.13px;font-size:15.8px;">1930</div>
<div class="t" style="left:359.2px;top:259.17px;font-size:15.75px;">1800Z</div>
<div class="t" style="right:561px;top:259.13px;font-size:15.8px;">581</div>
<div class="t" style="left:481.9px;top:258.92px;font-size:15.1px;">NOTNAMED</div>
<div class="t" style="right:391px;top:259.13px;font-size:15.8px;">20° N</div>
<div class="t" style="right:305.5px;top:259.13px;font-size:15.8px;">52° W</div>
<div class="t" style="right:196px;top:259.13px;font-size:15.8px;">35</div>
<div class="t" style="right:59px;top:259.13px;font-size:15.8px;">0</div>
<div class="t" style="left:983.5px;top:258.92px;font-size:15.1px;">TS</div>
<div class="t" style="right:743.5px;top:284.13px;font-size:15.8px;">7</div>
<div class="t" style="right:682.5px;top:284.13px;font-size:15.8px;">1930</div>
<div class="t" style="left:359.2px;top:284.17px;font-size:15.75px;">1800Z</div>
<div class="t" style="right:561px;top:284.13px;font-size:15.8px;">581</div>
<div class="t" style="left:481.9px;top:283.92px;font-size:15.1px;">NOTNAMED</div>
<div class="t" style="right:391px;top:284.13px;font-size:15.8px;">20° N</div>
<div class="t" style="right:305.5px;top:284.13px;font-size:15.8px;">52° W</div>
<div class="t" style="right:196px;top:284.13px;font-size:15.8px;">35</div>
<div class="t" style="right:59px;top:284.13px;font-size:15.8px;">0</div>
<div class="t" style="left:983.5px;top:283.92px;font-size:15.1px;">TS</div>
<div class="t" style="right:743.5px;top:309.13px;font-size:15.8px;">8</div>
<div class="t" style="right:682.5px;top:309.13px;font-size:15.8px;">1930</div>
<div class="t" style="left:359.2px;top:309.17px;font-size:15.75px;">1800Z</div>
<div class="t" style="right:561px;top:309.13px;font-size:15.8px;">581</div>
<div class="t" style="left:481.9px;top:308.92px;font-size:15.1px;">NOTNAMED</div>
<div class="t" style="right:391px;top:309.13px;font-size:15.8px;">20° N</div>
<div class="t" style="right:305.5px;top:309.13px;font-size:15.8px;">52° W</div>
<div class="t" style="right:196px;top:309.13px;font-size:15.8px;">35</div>
<div class="t" style="right:59px;top:309.13px;font-size:15.8px;">0</div>
<div class="t" style="left:983.5px;top:308.92px;font-size:15.1px;">TS</div>
<div class="t" style="right:743.5px;top:334.13px;font-size:15.8px;">9</div>
<div class="t" style="right:682.5px;top:334.13px;font-size:15.8px;">1930</div>
<div class="t" style="left:359.2px;top:334.17px;font-size:15.75px;">1800Z</div>
<div class="t" style="right:561px;top:334.13px;font-size:15.8px;">581</div>
<div class="t" style="left:481.9px;top:333.92px;font-size:15.1px;">NOTNAMED</div>
<div class="t" style="right:391px;top:334.13px;font-size:15.8px;">20° N</div>
<div class="t" style="right:305.5px;top:334.13px;font-size:15.8px;">52° W</div>
<div class="t" style="right:196px;top:334.13px;font-size:15.8px;">35</div>
<div class="t" style="right:59px;top:334.13px;font-size:15.8px;">0</div>
<div class="t" style="left:983.5px;top:333.92px;font-size:15.1px;">TS</div>
<div class="t" style="right:743.5px;top:359.13px;font-size:15.8px;">10</div>
<div class="t" style="right:682.5px;top:359.13px;font-size:15.8px;">1930</div>
<div class="t" style="left:359.2px;top:359.17px;font-size:15.75px;">1800Z</div>
<div class="t" style="right:561px;top:359.13px;font-size:15.8px;">581</div>
<div class="t" style="left:481.9px;top:358.92px;font-size:15.1px;">NOTNAMED</div>
<div class="t" style="right:391px;top:359.13px;font-size:15.8px;">20° N</div>
<div class="t" style="right:305.5px;top:359.13px;font-size:15.8px;">52° W</div>
<div class="t" style="right:196px;top:359.13px;font-size:15.8px;">35</div>
<div class="t" style="right:59px;top:359.13px;font-size:15.8px;">0</div>
<div class="t" style="left:983.5px;top:358.92px;font-size:15.1px;">TS</div>
<div class="t" style="right:743.5px;top:384.13px;font-size:15.8px;">11</div>
<div class="t" style="right:682.5px;top:384.13px;font-size:15.8px;">1930</div>
<div class="t" style="left:359.2px;top:384.17px;font-size:15.75px;">1800Z</div>
<div class="t" style="right:561px;top:384.13px;font-size:15.8px;">581</div>
<div class="t" style="left:481.9px;top:383.92px;font-size:15.1px;">NOTNAMED</div>
<div class="t" style="right:391px;top:384.13px;font-size:15.8px;">20° N</div>
<div class="t" style="right:305.5px;top:384.13px;font-size:15.8px;">52° W</div>
<div class="t" style="right:196px;top:384.13px;font-size:15.8px;">35</div>
<div class="t" style="right:59px;top:384.13px;font-size:15.8px;">0</div>
<div class="t" style="left:983.5px;top:383.92px;font-size:15.1px;">TS</div>
<div class="t" style="right:743.5px;top:409.13px;font-size:15.8px;">12</div>
<div class="t" style="right:682.5px;top:409.13px;font-size:15.8px;">1930</div>
<div class="t" style="left:359.2px;top:409.17px;font-size:15.75px;">1800Z</div>
<div class="t" style="right:561px;top:409.13px;font-size:15.8px;">581</div>
<div class="t" style="left:481.9px;top:408.92px;font-size:15.1px;">NOTNAMED</div>
<div class="t" style="right:391px;top:409.13px;font-size:15.8px;">20° N</div>
<div class="t" style="right:305.5px;top:409.13px;font-size:15.8px;">52° W</div>
<div class="t" style="right:196px;top:409.13px;font-size:15.8px;">35</div>
<div class="t" style="right:59px;top:409.13px;font-size:15.8px;">0</div>
<div class="t" style="left:983.5px;top:408.92px;font-size:15.1px;">TS</div>
<div class="t" style="right:743.5px;top:434.13px;font-size:15.8px;">13</div>
<div class="t" style="right:682.5px;top:434.13px;font-size:15.8px;">1930</div>
<div class="t" style="left:359.2px;top:434.17px;font-size:15.75px;">1800Z</div>
<div class="t" style="right:561px;top:434.13px;font-size:15.8px;">581</div>
<div class="t" style="left:481.9px;top:433.92px;font-size:15.1px;">NOTNAMED</div>
<div class="t" style="right:391px;top:434.13px;font-size:15.8px;">20° N</div>
<div class="t" style="right:305.5px;top:434.13px;font-size:15.8px;">52° W</div>
<div class="t" style="right:196px;top:434.13px;font-size:15.8px;">35</div>
<div class="t" style="right:59px;top:434.13px;font-size:15.8px;">0</div>
<div class="t" style="left:983.5px;top:433.92px;font-size:15.1px;">TS</div>
<div class="t" style="right:743.5px;top:459.13px;font-size:15.8px;">14</div>
<div class="t" style="right:682.5px;top:459.13px;font-size:15.8px;">1930</div>
<div class="t" style="left:359.2px;top:459.17px;font-size:15.75px;">1800Z</div>
<div class="t" style="right:561px;top:459.13px;font-size:15.8px;">581</div>
<div class="t" style="left:481.9px;top:458.92px;font-size:15.1px;">NOTNAMED</div>
<div class="t" style="right:391px;top:459.13px;font-size:15.8px;">20° N</div>
<div class="t" style="right:305.5px;top:459.13px;font-size:15.8px;">52° W</div>
<div class="t" style="right:196px;top:459.13px;font-size:15.8px;">35</div>
<div class="t" style="right:59px;top:459.13px;font-size:15.8px;">0</div>
<div class="t" style="left:983.5px;top:458.92px;font-size:15.1px;">TS</div>
<div class="t" style="right:743.5px;top:484.13px;font-size:15.8px;">15</div>
<div class="t" style="right:682.5px;top:484.13px;font-size:15.8px;">1930</div>
<div class="t" style="left:359.2px;top:484.17px;font-size:15.75px;">1800Z</div>
<div class="t" style="right:561px;top:484.13px;font-size:15.8px;">581</div>
<div class="t" style="left:481.9px;top:483.92px;font-size:15.1px;">NOTNAMED</div>
<div class="t" style="right:391px;top:484.13px;font-size:15.8px;">20° N</div>
<div class="t" style="right:305.5px;top:484.13px;font-size:15.8px;">52° W</div>
<div class="t" style="right:196px;top:484.13px;font-size:15.8px;">35</div>
<div class="t" style="right:59px;top:484.13px;font-size:15.8px;">0</div>
<div class="t" style="left:983.5px;top:483.92px;font-size:15.1px;">H1</div>
<div class="t" style="right:743.5px;top:509.13px;font-size:15.8px;">16</div>
<div class="t" style="right:682.5px;top:509.13px;font-size:15.8px;">1930</div>
<div class="t" style="left:359.2px;top:509.17px;font-size:15.75px;">1800Z</div>
<div class="t" style="right:561px;top:509.13px;font-size:15.8px;">581</div>
<div class="t" style="left:481.9px;top:508.92px;font-size:15.1px;">NOTNAMED</div>
<div class="t" style="right:391px;top:509.13px;font-size:15.8px;">20° N</div>
<div class="t" style="right:305.5px;top:509.13px;font-size:15.8px;">52° W</div>
<div class="t" style="right:196px;top:509.13px;font-size:15.8px;">35</div>
<div class="t" style="right:59px;top:509.13px;font-size:15.8px;">0</div>
<div class="t" style="left:983.5px;top:508.92px;font-size:15.1px;">H1</div>
<div class="t" style="right:743.5px;top:534.13px;font-size:15.8px;">17</div>
<div class="t" style="right:682.5px;top:534.13px;font-size:15.8px;">1930</div>
<div class="t" style="left:359.2px;top:534.17px;font-size:15.75px;">1800Z</div>
<div class="t" style="right:561px;top:534.13px;font-size:15.8px;">581</div>
<div class="t" style="left:481.9px;top:533.92px;font-size:15.1px;">NOTNAMED</div>
<div class="t" style="right:391px;top:534.13px;font-size:15.8px;">20° N</div>
<div class="t" style="right:305.5px;top:534.13px;font-size:15.8px;">52° W</div>
<div class="t" style="right:196px;top:534.13px;font-size:15.8px;">35</div>
<div class="t" style="right:59px;top:534.13px;font-size:15.8px;">0</div>
<div class="t" style="left:983.5px;top:533.92px;font-size:15.1px;">H1</div>
<div class="t" style="right:743.5px;top:559.13px;font-size:15.8px;">18</div>
<div class="t" style="right:682.5px;top:559.13px;font-size:15.8px;">1930</div>
<div class="t" style="left:359.2px;top:559.17px;font-size:15.75px;">1800Z</div>
<div class="t" style="right:561px;top:559.13px;font-size:15.8px;">581</div>
<div class="t" style="left:481.9px;top:558.92px;font-size:15.1px;">NOTNAMED</div>
<div class="t" style="right:391px;top:559.13px;font-size:15.8px;">20° N</div>
<div class="t" style="right:305.5px;top:559.13px;font-size:15.8px;">52° W</div>
<div class="t" style="right:196px;top:559.13px;font-size:15.8px;">35</div>
<div class="t" style="right:59px;top:559.13px;font-size:15.8px;">0</div>
<div class="t" style="left:983.5px;top:558.92px;font-size:15.1px;">H2</div>
<div class="t" style="right:743.5px;top:584.13px;font-size:15.8px;">19</div>
<div class="t" style="right:682.5px;top:584.13px;font-size:15.8px;">1930</div>
<div class="t" style="left:359.2px;top:584.17px;font-size:15.75px;">1800Z</div>
<div class="t" style="right:561px;top:584.13px;font-size:15.8px;">581</div>
<div class="t" style="left:481.9px;top:583.92px;font-size:15.1px;">NOTNAMED</div>
<div class="t" style="right:391px;top:584.13px;font-size:15.8px;">20° N</div>
<div class="t" style="right:305.5px;top:584.13px;font-size:15.8px;">52° W</div>
<div class="t" style="right:196px;top:584.13px;font-size:15.8px;">35</div>
<div class="t" style="right:59px;top:584.13px;font-size:15.8px;">0</div>
<div class="t" style="left:983.5px;top:583.92px;font-size:15.1px;">H2</div>
<div class="t" style="right:743.5px;top:609.13px;font-size:15.8px;">20</div>
<div class="t" style="right:682.5px;top:609.13px;font-size:15.8px;">1930</div>
<div class="t" style="left:359.2px;top:609.17px;font-size:15.75px;">1200Z</div>
<div class="t" style="right:561px;top:609.13px;font-size:15.8px;">581</div>
<div class="t" style="left:481.9px;top:608.92px;font-size:15.1px;">NOTNAMED</div>
<div class="t" style="right:391px;top:609.13px;font-size:15.8px;">31° N</div>
<div class="t" style="right:305.5px;top:609.13px;font-size:15.8px;">66° W</div>
<div class="t" style="right:196px;top:609.13px;font-size:15.8px;">95</div>
<div class="t" style="right:59px;top:609.13px;font-size:15.8px;">0</div>
<div class="t" style="left:983.5px;top:608.92px;font-size:15.1px;">H2</div>
<div class="t" style="right:743.5px;top:634.13px;font-size:15.8px;">21</div>
<div class="t" style="right:682.5px;top:634.13px;font-size:15.8px;">1930</div>
<div class="t" style="left:359.2px;top:634.17px;font-size:15.75px;">1800Z</div>
<div class="t" style="right:561px;top:634.13px;font-size:15.8px;">581</div>
<div class="t" style="left:481.9px;top:633.92px;font-size:15.1px;">NOTNAMED</div>
<div class="t" style="right:391px;top:634.13px;font-size:15.8px;">32° N</div>
<div class="t" style="right:305.5px;top:634.13px;font-size:15.8px;">66° W</div>
<div class="t" style="right:196px;top:634.13px;font-size:15.8px;">95</div>
<div class="t" style="right:59px;top:634.13px;font-size:15.8px;">0</div>
<div class="t" style="left:983.5px;top:633.92px;font-size:15.1px;">H2</div>
<div class="t" style="right:743.5px;top:659.13px;font-size:15.8px;">22</div>
<div class="t" style="right:682.5px;top:659.13px;font-size:15.8px;">1930</div>
<div class="t" style="left:359.2px;top:659.17px;font-size:15.75px;">0000Z</div>
<div class="t" style="right:561px;top:659.13px;font-size:15.8px;">581</div>
<div class="t" style="left:481.9px;top:658.92px;font-size:15.1px;">NOTNAMED</div>
<div class="t" style="right:391px;top:659.13px;font-size:15.8px;">33° N</div>
<div class="t" style="right:305.5px;top:659.13px;font-size:15.8px;">66° W</div>
<div class="t" style="right:196px;top:659.13px;font-size:15.8px;">90</div>
<div class="t" style="right:59px;top:659.13px;font-size:15.8px;">0</div>
<div class="t" style="left:983.5px;top:658.92px;font-size:15.1px;">H2</div>
<div class="t" style="right:743.5px;top:684.13px;font-size:15.8px;">23</div>
<div class="t" style="right:682.5px;top:684.13px;font-size:15.8px;">1930</div>
<div class="t" style="left:359.2px;top:684.17px;font-size:15.75px;">1800Z</div>
<div class="t" style="right:561px;top:684.13px;font-size:15.8px;">581</div>
<div class="t" style="left:481.9px;top:683.92px;font-size:15.1px;">NOTNAMED</div>
<div class="t" style="right:391px;top:684.13px;font-size:15.8px;">20° N</div>
<div class="t" style="right:305.5px;top:684.13px;font-size:15.8px;">52° W</div>
<div class="t" style="right:196px;top:684.13px;font-size:15.8px;">35</div>
<div class="t" style="right:59px;top:684.13px;font-size:15.8px;">0</div>
<div class="t" style="left:983.5px;top:683.92px;font-size:15.1px;">H2</div>
<div class="a" style="left:294px;top:130px;width:1px;height:550px;background:#cfcfdc"></div>
<div class="a" style="left:355px;top:130px;width:1px;height:550px;background:#cfcfdc"></div>
<div class="a" style="left:416px;top:130px;width:1px;height:550px;background:#cfcfdc"></div>
<div class="a" style="left:477px;top:130px;width:1px;height:550px;background:#cfcfdc"></div>
<div class="a" style="left:575px;top:130px;width:1px;height:550px;background:#cfcfdc"></div>
<div class="a" style="left:647px;top:130px;width:1px;height:550px;background:#cfcfdc"></div>
<div class="a" style="left:733px;top:130px;width:1px;height:550px;background:#cfcfdc"></div>
<div class="a" style="left:842px;top:130px;width:1px;height:550px;background:#cfcfdc"></div>
<div class="a" style="left:979px;top:130px;width:1px;height:550px;background:#cfcfdc"></div>
<div class="a" style="left:294px;top:130px;width:1px;height:566px;background:#a6a6a6"></div>
<div class="a" style="left:1012px;top:129px;width:17px;height:567px;background:#f0f0f0"></div>
<div class="a" style="left:1012px;top:146px;width:17px;height:7px;background:#cdcdcd"></div>
<svg style="left:1016px;top:135px" width="9" height="5"><path d="M0.5 4.5L4.5 0.5L8.5 4.5" fill="none" stroke="#a0a0a0"/></svg>
<svg style="left:1016px;top:668px" width="9" height="5"><path d="M0.5 0.5L4.5 4.5L8.5 0.5" fill="none" stroke="#a0a0a0"/></svg>
<div class="a" style="left:295px;top:680px;width:717px;height:16px;background:#f0f0f0"></div>
<div class="a" style="left:312px;top:680px;width:359px;height:16px;background:#cdcdcd"></div>
<svg style="left:299px;top:684px" width="5" height="9"><path d="M4.5 0.5L0.5 4.5L4.5 8.5" fill="none" stroke="#a0a0a0"/></svg>
<svg style="left:1003px;top:684px" width="5" height="9"><path d="M0.5 0.5L4.5 4.5L0.5 8.5" fill="none" stroke="#a0a0a0"/></svg>
<div class="a" style="left:3px;top:696px;width:1026px;height:21px;background:#dfe5ef;border-top:1px solid #8f9bcc"></div>
<div class="a" style="left:3px;top:697px;width:1026px;height:1px;background:#f4f6fa"></div>
<div class="a" style="left:946px;top:697px;width:1px;height:20px;background:#b0b8d0"></div>
<svg style="left:952px;top:702px" width="13" height="12"><path d="M0.5 6L6.5 0.5L12.5 6" fill="none" stroke="#2a8fd8" stroke-width="1.6"/><rect x="2.5" y="5.5" width="8" height="6" fill="#e9f3fb" stroke="#7fb8e6"/><rect x="5" y="7" width="3" height="5" fill="#9a6a2a"/></svg>
<div class="a" style="left:976px;top:701px;width:14px;height:13px;background:#fff;border:1px solid #555"></div>
<svg style="left:996px;top:704px" width="9" height="7"><path d="M0 0H9L4.5 7Z" fill="#111"/></svg>
<svg style="left:1013px;top:703px" width="15" height="13"><rect x="12" y="0" width="2" height="2" fill="#c4cad8"/><rect x="9" y="3" width="2" height="2" fill="#c4cad8"/><rect x="12" y="3" width="2" height="2" fill="#c4cad8"/><rect x="6" y="6" width="2" height="2" fill="#c4cad8"/><rect x="9" y="6" width="2" height="2" fill="#c4cad8"/><rect x="12" y="6" width="2" height="2" fill="#c4cad8"/><rect x="3" y="9" width="2" height="2" fill="#c4cad8"/><rect x="6" y="9" width="2" height="2" fill="#c4cad8"/><rect x="9" y="9" width="2" height="2" fill="#c4cad8"/><rect x="12" y="9" width="2" height="2" fill="#c4cad8"/></svg>
<div class="a" style="left:257px;top:157px;width:729px;height:457px;background:#fff;border-radius:8px;box-shadow:0 14px 44px rgba(0,0,0,0.36),0 0 0 1px rgba(0,0,0,0.22)"></div>
<svg style="left:265px;top:165px" width="16" height="14"><rect x="0" y="1" width="8" height="3" fill="#3aa23a"/><rect x="0" y="5" width="8" height="3" fill="#3aa23a"/><rect x="0" y="9" width="8" height="3" fill="#3aa23a"/><path d="M6.5 0.5H12L15 3.5V13.5H6.5Z" fill="#dbe8f5" stroke="#7a9cc8"/><circle cx="10" cy="6" r="1.5" fill="#222"/><path d="M9 9L15 7L11 13" fill="#2a86d6"/></svg>
<div class="t" style="left:286px;top:166.03px;font-size:11.66px;color:#111">Script for Hurricanes - JMP</div>
<div class="a" style="left:867px;top:171px;width:10px;height:1px;background:#222"></div>
<div class="a" style="left:912px;top:166px;width:10px;height:10px;border:1.2px solid #222;border-radius:1.5px"></div>
<svg style="left:958px;top:166px" width="10" height="10"><path d="M0 0L10 10M10 0L0 10" stroke="#222" stroke-width="1.1"/></svg>
<div class="t" style="left:281px;top:213.15px;font-size:14.94px;">Name:</div>
<div class="t" style="left:281px;top:242.96px;font-size:15.4px;">Script:</div>
<div class="a" style="left:330px;top:210px;width:551px;height:27px;border:1px solid #7a7a7a;background:#fff"></div>
<div class="t" style="left:332.4px;top:212.68px;font-size:15.5px;">Bubble Plot with Map</div>
<div class="a" style="left:888px;top:211px;width:94px;height:25px;background:#e1e1e1;border:1px solid #adadad"></div>
<div class="t" style="left:785px;width:300px;text-align:center;top:216.05px;font-size:15.3px;">OK</div>
<div class="a" style="left:888px;top:242px;width:94px;height:25px;background:#e1e1e1;border:1px solid #adadad"></div>
<div class="t" style="left:785px;width:300px;text-align:center;top:247.05px;font-size:15.3px;">Run</div>
<div class="a" style="left:888px;top:273px;width:94px;height:25px;background:#e1e1e1;border:1px solid #adadad"></div>
<div class="t" style="left:785px;width:300px;text-align:center;top:277.88px;font-size:15.5px;">Debug Script</div>
<div class="a" style="left:888px;top:304px;width:94px;height:25px;background:#e1e1e1;border:1px solid #adadad"></div>
<div class="t" style="left:785px;width:300px;text-align:center;top:309.05px;font-size:15.3px;">Save</div>
<div class="a" style="left:888px;top:335px;width:94px;height:25px;background:#e1e1e1;border:1px solid #adadad"></div>
<div class="t" style="left:785px;width:300px;text-align:center;top:340.05px;font-size:15.3px;">Cancel</div>
<div class="a" style="left:330px;top:240px;width:552px;height:352px;border:1px solid #111;background:#fff"></div>
<div class="a" style="left:331px;top:241px;width:16px;height:332px;background:#efefef"></div>
<div class="a" style="left:863px;top:241px;width:18px;height:332px;background:#f0f0f0"></div>
<div class="a" style="left:863px;top:259px;width:18px;height:93px;background:#cdcdcd"></div>
<svg style="left:868px;top:247px" width="9" height="5"><path d="M0.5 4.5L4.5 0.5L8.5 4.5" fill="none" stroke="#a8a8a8"/></svg>
<svg style="left:868px;top:562px" width="9" height="5"><path d="M0.5 0.5L4.5 4.5L8.5 0.5" fill="none" stroke="#a8a8a8"/></svg>
<div class="a" style="left:331px;top:573px;width:550px;height:18px;background:#f0f0f0"></div>
<svg style="left:338px;top:578px" width="5" height="9"><path d="M4.5 0.5L0.5 4.5L4.5 8.5" fill="none" stroke="#c0c0c0"/></svg>
<svg style="left:853px;top:578px" width="5" height="9"><path d="M0.5 0.5L4.5 4.5L0.5 8.5" fill="none" stroke="#c0c0c0"/></svg>
<svg style="left:349px;top:499px" width="10" height="74"><rect x="0.5" y="0.5" width="8" height="8" fill="#fff" stroke="#777"/><line x1="2" y1="4.5" x2="7" y2="4.5" stroke="#444"/><line x1="4.5" y1="9" x2="4.5" y2="74" stroke="#777"/></svg>
<svg style="left:399px;top:514px" width="1" height="59"><line x1="0.5" y1="0" x2="0.5" y2="59" stroke="#aaa" stroke-dasharray="1,1"/></svg>
<svg style="left:437px;top:535px" width="1" height="38"><line x1="0.5" y1="0" x2="0.5" y2="38" stroke="#aaa" stroke-dasharray="1,1"/></svg>
<div class="a" style="left:398px;top:409px;width:142px;height:20px;background:#a8cdf0"></div>
<div class="a" style="left:540px;top:409px;width:1px;height:20px;background:#000"></div>
<div class="a" style="left:347px;top:241px;width:516px;height:332px;overflow:hidden">
<div class="t" style="left:13px;top:4.27px;font-size:15.95px;font-family:'Liberation Mono',monospace;color:#111;-webkit-text-stroke:0"><span style="color:#980c0c">Bubble Plot(</span></div>
<div class="t" style="left:51px;top:25.27px;font-size:15.95px;font-family:'Liberation Mono',monospace;color:#111;-webkit-text-stroke:0">X( :Longitude ),</div>
<div class="t" style="left:51px;top:46.27px;font-size:15.95px;font-family:'Liberation Mono',monospace;color:#111;-webkit-text-stroke:0">Y( :Latitude ),</div>
<div class="t" style="left:51px;top:67.27px;font-size:15.95px;font-family:'Liberation Mono',monospace;color:#111;-webkit-text-stroke:0">Sizes( :"Wind (Knots)"n ),</div>
<div class="t" style="left:51px;top:88.27px;font-size:15.95px;font-family:'Liberation Mono',monospace;color:#111;-webkit-text-stroke:0">Time( :Date ),</div>
<div class="t" style="left:51px;top:109.27px;font-size:15.95px;font-family:'Liberation Mono',monospace;color:#111;-webkit-text-stroke:0">Coloring( :Landfall in USA ),</div>
<div class="t" style="left:51px;top:130.27px;font-size:15.95px;font-family:'Liberation Mono',monospace;color:#111;-webkit-text-stroke:0">ID( :Name and ID ),</div>
<div class="t" style="left:51px;top:151.27px;font-size:15.95px;font-family:'Liberation Mono',monospace;color:#111;-webkit-text-stroke:0">Size as Sum( <span style="color:#16868a">0</span> ),</div>
<div class="t" style="left:51px;top:172.27px;font-size:15.95px;font-family:'Liberation Mono',monospace;color:#111;-webkit-text-stroke:0">Speed( <span style="color:#16868a">60.44</span> ),</div>
<div class="t" style="left:51px;top:193.27px;font-size:15.95px;font-family:'Liberation Mono',monospace;color:#111;-webkit-text-stroke:0">Trail Bubbles( <span style="color:#16868a">1</span> ),</div>
<div class="t" style="left:51px;top:214.27px;font-size:15.95px;font-family:'Liberation Mono',monospace;color:#111;-webkit-text-stroke:0">Color Levels( [<span style="color:#16868a">0 0.25 0.5 0.75 1</span>] ),</div>
<div class="t" style="left:51px;top:235.27px;font-size:15.95px;font-family:'Liberation Mono',monospace;color:#111;-webkit-text-stroke:0">Title Position( -<span style="color:#16868a">88.679</span>, <span style="color:#16868a">59.73</span> ),</div>
<div class="t" style="left:51px;top:256.27px;font-size:15.95px;font-family:'Liberation Mono',monospace;color:#111;-webkit-text-stroke:0">SendToReport(</div>
<div class="t" style="left:89px;top:277.27px;font-size:15.95px;font-family:'Liberation Mono',monospace;color:#111;-webkit-text-stroke:0">Dispatch(</div>
<div class="t" style="left:127px;top:298.27px;font-size:15.95px;font-family:'Liberation Mono',monospace;color:#111;-webkit-text-stroke:0">{},</div>
<div class="t" style="left:127px;top:319.27px;font-size:15.95px;font-family:'Liberation Mono',monospace;color:#111;-webkit-text-stroke:0"><span style="color:#8a1090">"1"</span>,</div>
</div>
</body></html>
